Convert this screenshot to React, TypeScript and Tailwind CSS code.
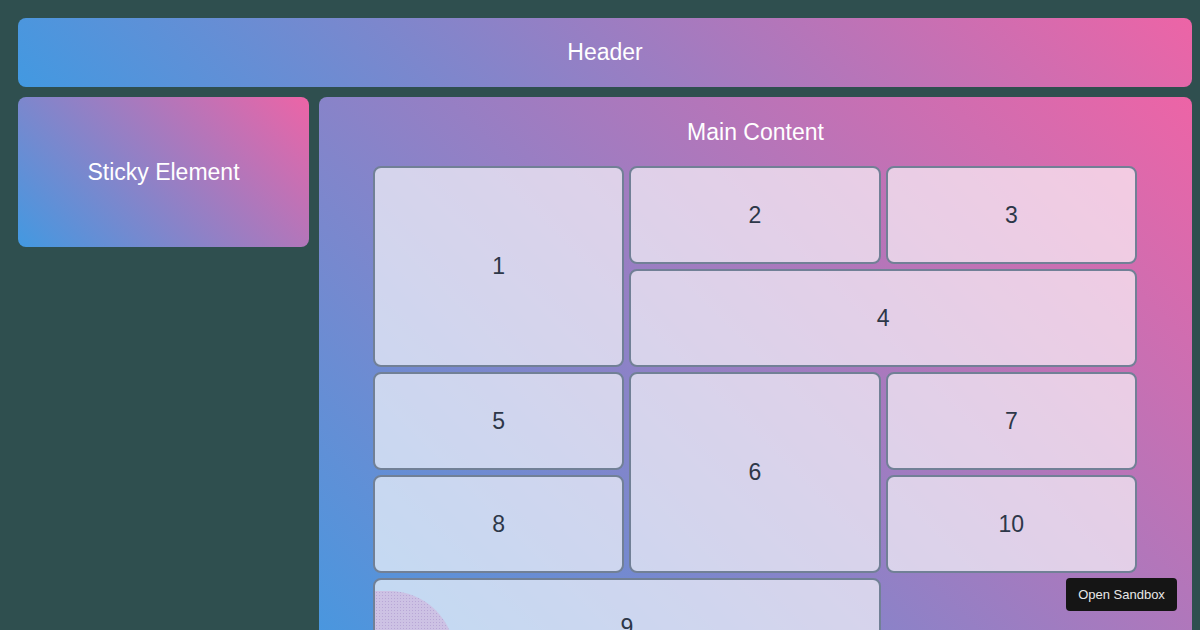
const cells = [
  { n: '1', span: 'row-span-2' },
  { n: '2', span: '' },
  { n: '3', span: '' },
  { n: '4', span: 'col-span-2' },
  { n: '5', span: '' },
  { n: '6', span: 'row-span-2' },
  { n: '7', span: '' },
  { n: '8', span: '' },
  { n: '9', span: 'col-span-2' },
  { n: '10', span: '' },
]

const gradient = 'bg-[linear-gradient(45deg,#4299e1,#ed64a6)]'

function Cell({ n, span }: { n: string, span: string }) {
  return (
    <div className={`relative flex items-center justify-center overflow-hidden rounded-lg border-2 border-[#718096] bg-white/65 text-[23px] text-[#2d3748] ${span}`}>
      {n === '9' && (
        <div className="absolute left-0 top-[11px] h-[160px] w-[80px] rounded-tr-[66px] bg-[#cdc2e4] bg-[radial-gradient(#b8a7d6_0.8px,transparent_0.8px)] bg-[size:3px_3px]" />
      )}
      <span className="relative">{n}</span>
    </div>
  )
}

export default function App() {
  return (
    <div className="min-h-screen bg-[#2f4f4f] pb-[18px] pl-[18px] pr-[8px] pt-[18px] font-['Liberation_Sans',Arial,sans-serif]">
      <div className="flex flex-col gap-[10px]">
        <header className={`flex h-[69px] items-center justify-center rounded-lg text-[23px] text-white ${gradient}`}>
          Header
        </header>
        <div className="grid grid-cols-[1fr_3fr] items-start gap-[10px]">
          <aside className={`flex h-[150px] items-center justify-center rounded-lg text-[23px] text-white ${gradient}`}>
            Sticky Element
          </aside>
          <main className={`rounded-lg pb-[20px] pl-[55px] pr-[55px] pt-[19px] ${gradient}`}>
            <h1 className="mb-[18px] text-center text-[23px] leading-8 text-white">Main Content</h1>
            <div className="-ml-px grid grid-flow-dense grid-cols-3 auto-rows-[98px] gap-[5px]">
              {cells.map(c => (
                <Cell key={c.n} n={c.n} span={c.span} />
              ))}
            </div>
          </main>
        </div>
      </div>
      <button
        type="button"
        className="fixed bottom-[19px] right-[23px] flex h-[33px] w-[111px] items-center justify-center rounded-[4px] bg-[#151515] text-[13px] text-[#e8e8e8]"
      >
        Open Sandbox
      </button>
    </div>
  )
}
